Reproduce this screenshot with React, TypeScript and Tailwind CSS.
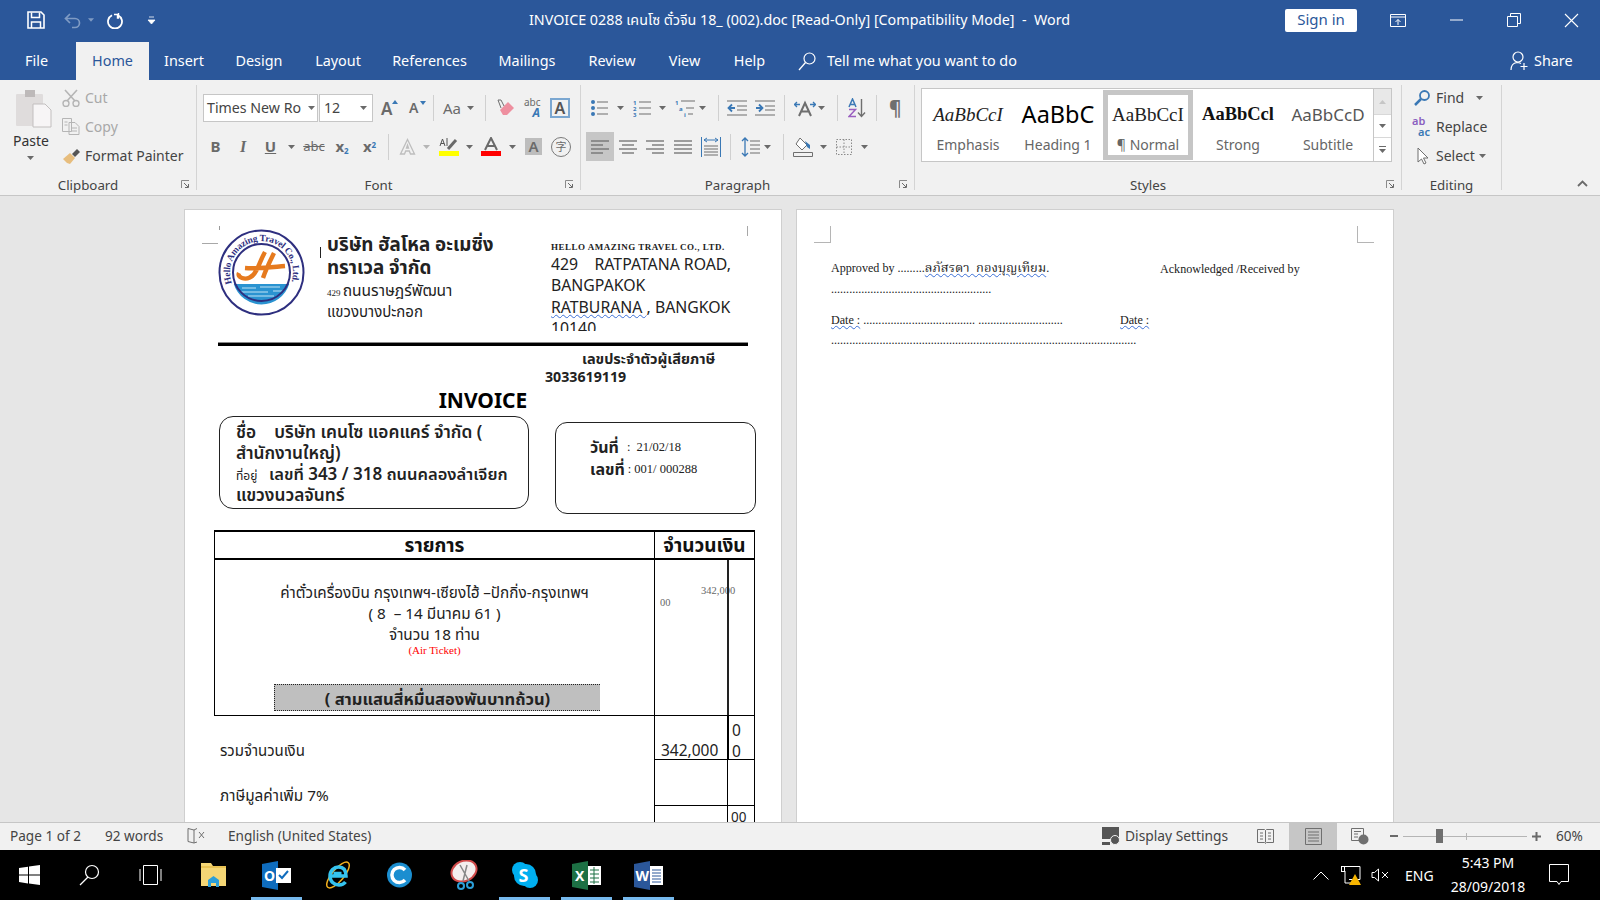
import type { ReactNode } from 'react'

const UI = "font-['Noto_Sans','Noto_Sans_Thai','DejaVu_Sans',sans-serif]"
const SERIF = "font-['Liberation_Serif','Noto_Serif_Thai','DejaVu_Serif',serif]"

function I({ w, h, children, className }: { w: number; h: number; children: ReactNode; className?: string }) {
  return (
    <svg width={w} height={h} viewBox={`0 0 ${w} ${h}`} fill="none" className={'block shrink-0 ' + (className ?? '')}>
      {children}
    </svg>
  )
}

function Caret({ className, color = '#6a6a6a' }: { className?: string; color?: string }) {
  return (
    <I w={7} h={4} className={className}>
      <path d="M0 0h7L3.500 4z" fill={color} />
    </I>
  )
}

function Sep({ className }: { className?: string }) {
  return <div className={'h-[26px] w-px shrink-0 bg-[#d0d0d0] ' + (className ?? '')} />
}

function Launcher() {
  return (
    <I w={9} h={9} className="absolute right-[6px] top-0">
      <path d="M.5 8V.5H8" stroke="#8a8a8a" />
      <path d="M3 3l4 4M4 7.500h3.500V4" stroke="#6a6a6a" />
    </I>
  )
}

function Group({ label, w, children }: { label: string; w: string; children: ReactNode }) {
  return (
    <div className={'relative flex h-[105px] shrink-0 flex-col border-r border-[#d4d4d4] ' + w}>
      <div className="flex-1">{children}</div>
      <div className="relative h-[10px] pr-[20px] text-center text-[13.3px] leading-[10px] text-[#444]">
        {label}
        <Launcher />
      </div>
    </div>
  )
}

function LinesIcon({ rows, color = '#6f6f6f' }: { rows: [number, number][]; color?: string }) {
  return (
    <I w={19} h={14}>
      {rows.map(([a, b], i) => (
        <path key={i} d={`M${a} ${1 + i * 4}H${b}`} stroke={color} strokeWidth="1.3" />
      ))}
    </I>
  )
}

function TitleBar() {
  return (
    <div className="flex h-[40px] shrink-0 items-center bg-[#2b579a] text-white">
      <I w={18} h={18} className="ml-[27px]">
        <path d="M1 1h13l3 3v13H1z" stroke="#fff" strokeWidth="1.6" />
        <path d="M4.500 1.500v5h8v-5M4.500 17v-6h9v6" stroke="#fff" strokeWidth="1.500" />
      </I>
      <I w={17} h={17} className="ml-[19px]">
        <path d="M6 2L1.500 6.500 6 11M2 6.500h9a4.500 4.500 0 0 1 0 9H8" stroke="#7f9bc4" strokeWidth="1.700" />
      </I>
      <Caret className="ml-[7px] w-[6px]" color="#7f9bc4" />
      <I w={17} h={17} className="ml-[13px]">
        <path d="M5 3.200a7 7 0 1 0 6 0" stroke="#fff" strokeWidth="1.800" />
        <path d="M11.500 1v5h-1V2.500H7" stroke="#fff" strokeWidth="1.400" />
      </I>
      <I w={9} h={9} className="ml-[23px]">
        <path d="M2 1h5M1 4h7L4.500 8z" stroke="#fff" fill="#fff" strokeWidth=".8" />
      </I>
      <div className="ml-[373px] w-[535px] whitespace-nowrap text-[14.3px]">
        INVOICE 0288 เคนโซ ตั๋วจีน 18_ (002).doc [Read-Only] [Compatibility Mode]&nbsp; -&nbsp; Word
      </div>
      <div className="ml-[221px] flex h-[23px] w-[72px] items-center justify-center rounded-[2px] bg-white pb-px text-[15px] text-[#2b579a]">
        Sign in
      </div>
      <I w={16} h={13} className="ml-[33px]">
        <path d="M.5.5h15v12H.5zM.5 3h15M8 11V5.500M5.500 8L8 5.500 10.500 8" stroke="#fff" />
      </I>
      <I w={13} h={2} className="ml-[44px]">
        <path d="M0 1h13" stroke="#fff" />
      </I>
      <I w={14} h={14} className="ml-[44px]">
        <path d="M.5 3.500h10v10H.5zM3.500 3.500v-3h10v10h-3" stroke="#fff" />
      </I>
      <I w={15} h={15} className="ml-[43px]">
        <path d="M1 1l13 13M14 1L1 14" stroke="#fff" strokeWidth="1.100" />
      </I>
    </div>
  )
}

function TabBar() {
  const tabs: [string, string][] = [
    ['Insert', 'w-[70px]'],
    ['Design', 'w-[80px]'],
    ['Layout', 'w-[78px]'],
    ['References', 'w-[105px]'],
    ['Mailings', 'w-[90px]'],
    ['Review', 'w-[80px]'],
    ['View', 'w-[65px]'],
    ['Help', 'w-[65px]'],
  ]
  return (
    <div className="flex h-[40px] shrink-0 items-end bg-[#2b579a] text-[14.4px] text-white">
      <div className="flex h-[38px] w-[76px] items-center justify-center pr-[3px]">File</div>
      <div className="flex h-[38px] w-[73px] items-center justify-center bg-[#f1f1f1] text-[#2b579a]">Home</div>
      {tabs.map(([t, w]) => (
        <div key={t} className={'flex h-[38px] items-center justify-center ' + w}>
          {t}
        </div>
      ))}
      <div className="flex h-[38px] items-center">
        <I w={18} h={19} className="ml-[16px]">
          <circle cx="11.500" cy="6.500" r="5.500" stroke="#fff" strokeWidth="1.200" />
          <path d="M7.500 10.500L1 18" stroke="#fff" strokeWidth="1.300" />
        </I>
        <span className="ml-[11px] w-[188px] whitespace-nowrap">Tell me what you want to do</span>
        <I w={19} h={20} className="ml-[495px]">
          <circle cx="8" cy="6" r="5" stroke="#fff" strokeWidth="1.200" />
          <path d="M1 19c0-5 2-7 6-7.500 2 0 3 .5 4 1M14 12v7M10.500 15.500h7" stroke="#fff" strokeWidth="1.200" />
        </I>
        <span className="ml-[5px]">Share</span>
      </div>
    </div>
  )
}

function ClipboardGroup() {
  return (
    <Group label="Clipboard" w="w-[197px]">
      <div className="flex">
        <div className="flex w-[62px] flex-col items-center pt-[5px]">
          <I w={36} h={38} className="translate-x-[3px]">
            <rect x="0" y="4" width="27" height="32" fill="#dfdcdc" rx="1" />
            <rect x="9" y="0" width="10" height="7" fill="#bdb9b9" />
            <path d="M17 14h12l6 6v17H17z" fill="#f7f5f6" stroke="#c2bfbf" />
          </I>
          <div className="mt-[3px] h-[20px] text-[14px] leading-[20px] text-[#333]">Paste</div>
          <Caret className="mt-[5px] mr-[2px]" />
        </div>
        <div className="flex flex-col text-[14px]">
          <div className="flex h-[25px] items-center text-[#a8a8a8]">
            <I w={18} h={18}>
              <path d="M3 1l10 11M15 1L5 12" stroke="#b5b5b5" strokeWidth="1.600" />
              <circle cx="4" cy="14.500" r="3" stroke="#b5b5b5" strokeWidth="1.400" />
              <circle cx="14" cy="14.500" r="3" stroke="#b5b5b5" strokeWidth="1.400" />
            </I>
            <span className="ml-[5px]">Cut</span>
          </div>
          <div className="flex h-[32px] items-center text-[#a8a8a8]">
            <I w={18} h={18}>
              <path d="M.5 1.500h9v13h-9zM7 5.500h6l4 4v8H7z" stroke="#b5b5b5" fill="#f1f1f1" />
              <path d="M2.500 5h3M2.500 8h3M9 11h6M9 14h6" stroke="#b5b5b5" />
            </I>
            <span className="ml-[5px]">Copy</span>
          </div>
          <div className="flex h-[27px] items-center whitespace-nowrap text-[#444]">
            <I w={20} h={18}>
              <path d="M1 12l7-6 5 5-5 6-3-1z" fill="#e7bd7d" />
              <path d="M10 7l5-5 3 3-5 5z" fill="#555" />
            </I>
            <span className="ml-[3px]">Format Painter</span>
          </div>
        </div>
      </div>
    </Group>
  )
}

function BigA({ size, up }: { size: number; up: boolean }) {
  return (
    <span className="relative block w-[17px] text-[#6a6a6a]">
      <span className={"block font-['Noto_Sans'] font-semibold leading-none " + (size > 16 ? 'text-[17px]' : 'text-[14px]')}>A</span>
      <span className={'absolute right-0 top-[0px] h-0 w-0 border-x-[3px] border-x-transparent ' + (up ? 'border-b-[4px] border-b-[#3a78b5]' : 'border-t-[4px] border-t-[#3a78b5]')} />
    </span>
  )
}

function FontGroup() {
  return (
    <Group label="Font" w="w-[384px]">
      <div className="ml-[6px] mt-[9px] flex h-[28px] items-center">
        <div className="flex h-[28px] w-[115px] items-center border border-[#c6c6c6] bg-white pl-[3px] text-[14.2px] text-[#444]">
          <span className="w-[101px] whitespace-nowrap">Times New Ro</span>
          <Caret />
        </div>
        <div className="ml-[1px] flex h-[28px] w-[54px] items-center border border-[#c6c6c6] bg-white pl-[4px] text-[14.2px] text-[#444]">
          <span className="w-[36px]">12</span>
          <Caret />
        </div>
        <div className="ml-[8px]"><BigA size={17} up /></div>
        <div className="ml-[11px] w-[16px]"><BigA size={14} up={false} /></div>
        <Sep className="ml-[8px]" />
        <span className="ml-[9px] w-[18px] whitespace-nowrap text-[15px] leading-none text-[#6a6a6a]">Aa</span>
        <Caret className="ml-[6px]" />
        <Sep className="ml-[11px]" />
        <I w={18} h={18} className="ml-[11px]">
          <path d="M3 11L11 3l6 6-7 7H6z" fill="#ee8f9f" />
          <path d="M4 9L1 1h3l3 6" stroke="#6f6f6f" />
        </I>
        <div className="ml-[9px] flex w-[16px] flex-col">
          <div className="h-[10px] text-[10px] leading-[10px] text-[#6a6a6a]">abc</div>
          <div className="h-[12px] text-right text-[12px] font-bold italic leading-[12px] text-[#3a78b5]">A</div>
        </div>
        <div className="ml-[10px] flex h-[20px] w-[20px] items-center justify-center border-2 border-[#7ba7d1] text-[16px] font-semibold text-[#555]">A</div>
      </div>
      <div className="ml-[6px] mt-[10px] flex h-[29px] items-center text-[#6a6a6a]">
        <span className="ml-[4px] w-[17px] text-center text-[15px] font-bold">B</span>
        <span className={SERIF + ' ml-[10px] w-[18px] text-center text-[16px] font-bold italic'}>I</span>
        <span className="ml-[10px] w-[17px] text-center text-[15px] font-bold underline">U</span>
        <Caret className="ml-[9px]" />
        <span className="ml-[7px] w-[24px] text-center text-[13px] line-through">abc</span>
        <span className="ml-[7px] w-[18px] whitespace-nowrap text-center text-[15px] font-bold">x<sub className="text-[8px] text-[#3a78b5]">2</sub></span>
        <span className="ml-[10px] w-[17px] whitespace-nowrap text-center text-[15px] font-bold">x<sup className="text-[8px] text-[#3a78b5]">2</sup></span>
        <Sep className="ml-[10px]" />
        <I w={17} h={18} className="ml-[10px]">
          <path d="M1.500 16L8.500 1.500 15.500 16h-4l-1.200-3H6.700L5.500 16zM7.500 10h2L8.500 7z" stroke="#bdbdbd" strokeWidth="1.300" />
        </I>
        <Caret className="ml-[7px]" color="#b5b5b5" />
        <I w={20} h={19} className="ml-[9px]">
          <path d="M1 9l2.500-7L6 9M1.800 6.500h3.400M8 1v8" stroke="#555" />
          <path d="M9 12l8-9" stroke="#6a6a6a" strokeWidth="3" />
          <rect x="0" y="14" width="20" height="5" fill="#ffff00" />
        </I>
        <Caret className="ml-[7px]" />
        <I w={20} h={19} className="ml-[8px]">
          <path d="M4 13L10 1l6 12M6 9h8" stroke="#6a6a6a" strokeWidth="2" />
          <rect x="0" y="14" width="20" height="5" fill="#ff0000" />
        </I>
        <Caret className="ml-[8px]" />
        <div className="ml-[9px] flex h-[17px] w-[17px] items-center justify-center bg-[#bdbdbd] text-[15px] font-semibold">A</div>
        <div className="ml-[9px] flex h-[20px] w-[20px] items-center justify-center rounded-full border border-[#7a7a7a] text-[11px] font-['Noto_Sans_CJK_SC',sans-serif]">字</div>
      </div>
    </Group>
  )
}

function ParagraphGroup() {
  const G = '#6f6f6f'
  const B = '#3a78b5'
  return (
    <Group label="Paragraph" w="w-[334px]">
      <div className="mt-[9px] flex h-[28px] items-center">
        <I w={17} h={16} className="ml-[10px]">
          <g fill={B}><circle cx="2" cy="2" r="2" /><circle cx="2" cy="8" r="2" /><circle cx="2" cy="14" r="2" /></g>
          <path d="M6 2h11M6 8h11M6 14h11" stroke={G} strokeWidth="1.200" />
        </I>
        <Caret className="ml-[9px]" />
        <I w={18} h={18} className="ml-[9px]">
          <g fill={B} fontSize="6" fontWeight="700"><text x="0" y="6">1</text><text x="0" y="12">2</text><text x="0" y="18">3</text></g>
          <path d="M6 3h12M6 9h12M6 15h12" stroke={G} strokeWidth="1.200" />
        </I>
        <Caret className="ml-[8px]" />
        <I w={20} h={18} className="ml-[9px]">
          <g fill={B} fontSize="6" fontWeight="700"><text x="0" y="6">1</text><text x="4" y="12">a</text><text x="9" y="18">i</text></g>
          <path d="M6 2h14M11 9h8M13 15h5" stroke={G} strokeWidth="1.200" />
        </I>
        <Caret className="ml-[4px]" />
        <Sep className="ml-[12px]" />
        <I w={20} h={16} className="ml-[8px]">
          <path d="M0 1h20M10 6h10M10 10h10M0 15h20" stroke={G} strokeWidth="1.200" />
          <path d="M8 8H2M5 4.500L1.500 8 5 11.500" stroke={B} strokeWidth="1.800" />
        </I>
        <I w={20} h={16} className="ml-[8px]">
          <path d="M0 1h20M10 6h10M10 10h10M0 15h20" stroke={G} strokeWidth="1.200" />
          <path d="M1 8h6M4 4.500L7.500 8 4 11.500" stroke={B} strokeWidth="1.800" />
        </I>
        <Sep className="ml-[9px]" />
        <I w={22} h={17} className="ml-[9px]">
          <path d="M5 16L11 3l6 13M7.500 11.500h7" stroke={G} strokeWidth="2" />
          <path d="M1 4.500h5M3 2L.5 4.500 3 7M16 4.500h5M19 2l2.500 2.500L19 7" stroke={B} strokeWidth="1.300" />
        </I>
        <Caret className="ml-[2px]" />
        <Sep className="ml-[12px]" />
        <I w={18} h={20} className="ml-[10px]">
          <path d="M1 9l3.500-8L8 9M2.200 6.500h4.600" stroke={B} strokeWidth="1.500" />
          <path d="M1 11.500h6.500L1 18.500h7" stroke="#9a5fc0" strokeWidth="1.500" />
          <path d="M13.500 1v17M10 14.500l3.500 4 3.500-4" stroke={G} strokeWidth="1.400" />
        </I>
        <Sep className="ml-[10px]" />
        <span className="ml-[12px] text-[19px] font-bold leading-none text-[#6f6f6f]">¶</span>
      </div>
      <div className="mt-[10px] flex h-[29px] items-center">
        <div className="ml-[5px] flex h-[29px] w-[28px] items-center justify-center bg-[#c6c6c6]">
          <LinesIcon rows={[[0, 18], [0, 12], [0, 18], [0, 12]]} />
        </div>
        <div className="ml-[5px]"><LinesIcon rows={[[0, 18], [3, 15], [0, 18], [3, 15]]} /></div>
        <div className="ml-[8px]"><LinesIcon rows={[[0, 18], [6, 18], [0, 18], [6, 18]]} /></div>
        <div className="ml-[9px]"><LinesIcon rows={[[0, 18], [0, 18], [0, 18], [0, 18]]} /></div>
        <I w={20} h={20} className="ml-[8px]">
          <path d="M.5 0v20M19.500 0v20" stroke={B} />
          <path d="M3 3h14M6 1L3 3l3 2M14 1l3 2-3 2" stroke={B} />
          <path d="M3 9h14M3 12h14M3 15h14M3 18h14" stroke={G} strokeWidth="1.200" />
        </I>
        <Sep className="ml-[9px]" />
        <I w={19} h={20} className="ml-[10px]">
          <path d="M4 1v18M1 4l3-3 3 3M1 16l3 3 3-3" stroke={B} strokeWidth="1.300" />
          <path d="M9 4h10M9 8h10M9 12h10M9 16h10" stroke={G} strokeWidth="1.200" />
        </I>
        <Caret className="ml-[4px]" />
        <Sep className="ml-[12px]" />
        <I w={20} h={20} className="ml-[9px]">
          <path d="M7 1l7 7-5 5-6-6z" stroke={G} fill="#fff" />
          <path d="M12 4l5 4v4l-3-2z" fill={B} />
          <path d="M.5 15.500h19v4H.5z" stroke={G} />
        </I>
        <Caret className="ml-[7px]" />
        <I w={16} h={16} className="ml-[9px]">
          <path d="M.5.5h15v15H.5zM8 .5v15M.5 8h15" stroke="#8a8a8a" strokeDasharray="1.500 1.500" />
        </I>
        <Caret className="ml-[9px]" />
      </div>
    </Group>
  )
}

function StyleItem({ sample, label, sel }: { sample: ReactNode; label: string; sel?: boolean }) {
  return (
    <div className={'flex h-[70px] w-[90px] shrink-0 flex-col items-center ' + (sel ? 'border-[5px] border-[#c6c6c6]' : 'border-[5px] border-transparent')}>
      <div className="flex h-[42px] items-center whitespace-nowrap">{sample}</div>
      <div className="text-[14px] leading-[20px] text-[#666]">{label}</div>
    </div>
  )
}

function StylesGroup() {
  return (
    <Group label="Styles" w="w-[487px]">
      <div className="ml-[6px] mt-[3px] flex h-[74px] w-[471px] items-center border border-[#c6c6c6] bg-white pl-[1px]">
        <StyleItem label="Emphasis" sample={<span className={SERIF + ' text-[19px] italic text-[#222]'}>AaBbCcI</span>} />
        <StyleItem label="Heading 1" sample={<span className="text-[23.500px] text-black">AaBbC</span>} />
        <StyleItem label="¶ Normal" sel sample={<span className={SERIF + ' text-[19px] text-[#222]'}>AaBbCcI</span>} />
        <StyleItem label="Strong" sample={<span className={SERIF + ' text-[18.500px] font-bold text-[#111]'}>AaBbCcl</span>} />
        <StyleItem label="Subtitle" sample={<span className="text-[17px] text-[#555]">AaBbCcD</span>} />
        <div className="flex h-[72px] w-[18px] shrink-0 flex-col border-l border-[#c6c6c6]">
          <div className="flex h-[26px] items-center justify-center border-b border-[#d8d8d8] bg-[#e8e8e8]"><Caret className="rotate-180" color="#c6c6c6" /></div>
          <div className="flex h-[23px] items-center justify-center border-b border-[#d8d8d8]"><Caret /></div>
          <div className="flex flex-1 flex-col items-center justify-center gap-[2px]">
            <div className="h-px w-[7px] bg-[#6a6a6a]" />
            <Caret />
          </div>
        </div>
      </div>
    </Group>
  )
}

function EditingGroup() {
  return (
    <div className="relative flex h-[105px] w-[100px] shrink-0 flex-col border-r border-[#d4d4d4]">
      <div className="flex-1 text-[14px] text-[#444]">
        <div className="flex h-[25px] items-center">
          <I w={16} h={16} className="ml-[12px]">
            <circle cx="10.500" cy="5.500" r="4.500" stroke="#3a78b5" strokeWidth="1.800" />
            <path d="M7 9l-6 6" stroke="#3a78b5" strokeWidth="2.500" />
          </I>
          <span className="ml-[6px] w-[40px]">Find</span>
          <Caret />
        </div>
        <div className="flex h-[32px] items-center">
          <div className="ml-[10px] w-[24px] text-[11px] font-semibold text-[#3a78b5]">
            <div className="h-[11px] leading-[11px] text-[#8a5fc0]">ab</div>
            <div className="h-[11px] pl-[6px] leading-[11px]">ac</div>
          </div>
          <span>Replace</span>
        </div>
        <div className="flex h-[27px] items-center">
          <I w={13} h={18} className="ml-[15px]">
            <path d="M1 1v14l3.500-3 2.500 5 2-1-2.500-5H11z" stroke="#6f6f6f" fill="#fff" />
          </I>
          <span className="ml-[6px] w-[40px]">Select</span>
          <Caret className="ml-[3px]" />
        </div>
      </div>
      <div className="h-[10px] text-center text-[13.3px] leading-[10px] text-[#444]">Editing</div>
    </div>
  )
}

function Ribbon() {
  return (
    <div className="flex h-[116px] shrink-0 border-b border-[#c6c6c6] bg-[#f1f1f1] pt-[5px]">
      <ClipboardGroup />
      <FontGroup />
      <ParagraphGroup />
      <StylesGroup />
      <EditingGroup />
      <div className="flex h-[105px] flex-1 items-end justify-end pb-[3px] pr-[12px]">
        <I w={11} h={7}>
          <path d="M1 6l4.500-4.500L10 6" stroke="#6a6a6a" strokeWidth="1.800" />
        </I>
      </div>
    </div>
  )
}

function Logo() {
  return (
    <svg width="87" height="87" viewBox="0 0 87 87" fill="none" className="block shrink-0">
      <circle cx="43.500" cy="43.500" r="42" fill="#fff" stroke="#2e2f7f" strokeWidth="2" />
      <path d="M15.800 55h55.400a29 29 0 0 1-55.400 0z" fill="#2a93d1" />
      <path d="M24 59h14M42 58h20M22 63h28M55 62h10M30 67h26" stroke="#bfe3f5" strokeWidth="1.200" />
      <circle cx="43.500" cy="43.500" r="28.500" stroke="#2e2f7f" strokeWidth="2" />
      <defs>
        <path id="logo-ring" d="M13.900 54.300A31.500 31.500 0 1 1 73.100 54.300" />
      </defs>
      <text fontSize="9.400" fontWeight="700" fill="#2e2f7f" fontFamily="Liberation Serif" textLength="119">
        <textPath href="#logo-ring">Hello Amazing Travel Co., Ltd.</textPath>
      </text>
      <path d="M47 23c-4 7-6 14-9 19-3 6-9 9-14 7-3-1-4-3-3-5M56 24c-4 8-8 16-11 25M27 39c14 1 28-1 40-2" stroke="#e67a1e" strokeWidth="4.400" />
    </svg>
  )
}

function PageOne() {
  return (
    <div className="relative h-[720px] w-[598px] shrink-0 border border-[#cfcfcf] bg-white pl-[29px] pt-[19px] text-[#222]">
      <div className="absolute left-[34px] top-[16px] h-[4px] w-px bg-[#9a9a9a]" />
      <div className="absolute left-[17px] top-[33px] h-px w-[16px] bg-[#a8a8a8]" />
      <div className="absolute left-[562px] top-[16px] h-[10px] w-px bg-[#a8a8a8]" />
      <div className="absolute left-[135px] top-[37px] h-[11px] w-px bg-[#222]" />
      <div className="ml-[4px] flex h-[113px]">
        <Logo />
        <div className="ml-[22px] w-[224px] pt-[4px]">
          <div className="h-[23px] whitespace-nowrap text-[18.800px] font-bold leading-[23px]">บริษัท ฮัลโหล อะเมซิ่ง</div>
          <div className="h-[23px] whitespace-nowrap text-[18.800px] font-bold leading-[23px]">ทราเวล จำกัด</div>
          <div className="mt-[1px] h-[21px] whitespace-nowrap text-[15.500px] leading-[21px]">
            <span className={SERIF + ' text-[9px]'}>429 </span>ถนนราษฎร์พัฒนา
          </div>
          <div className="h-[21px] whitespace-nowrap text-[15px] leading-[21px]">แขวงบางปะกอก</div>
        </div>
        <div className="pt-[12px] text-[15.800px] text-[#222]">
          <div className={SERIF + ' h-[13px] whitespace-nowrap text-[9px] font-bold leading-[13px] tracking-[0.5px]'}>HELLO AMAZING TRAVEL CO., LTD.</div>
          <div className="h-[21px] whitespace-nowrap leading-[21px]">429 &nbsp; &nbsp;RATPATANA ROAD,</div>
          <div className="h-[21.500px] leading-[21px]">BANGPAKOK</div>
          <div className="h-[21.500px] whitespace-nowrap leading-[21px]">
            <span className="underline decoration-[#3b6fd6] decoration-wavy decoration-1">RATBURANA </span>, BANGKOK
          </div>
          <div className="h-[13px] overflow-hidden leading-[21px]">10140</div>
        </div>
      </div>
      <div className="ml-[4px] h-[4px] w-[530px] border-t border-[#8a8a8a] bg-black" />
      <div className="ml-[368px] mt-[2px] h-[21px] whitespace-nowrap text-[14.500px] font-bold leading-[21px]">เลขประจำตัวผู้เสียภาษี</div>
      <div className="ml-[331px] h-[16px] text-[14.200px] font-bold leading-[16px]">3033619119</div>
      <div className="ml-[4px] h-[31px] w-[530px] text-center text-[21px] font-bold leading-[30px] text-black">INVOICE</div>
      <div className="flex items-start">
        <div className="ml-[5px] h-[93px] w-[310px] rounded-[14px] border-[1.500px] border-[#222] pl-[16px] pt-[4px] text-[17.300px] font-semibold">
          <div className="h-[21px] whitespace-nowrap leading-[21px]">ชื่อ &nbsp; &nbsp;บริษัท เคนโซ แอคแคร์ จำกัด (</div>
          <div className="h-[21px] leading-[21px]">สำนักงานใหญ่)</div>
          <div className="h-[21px] whitespace-nowrap text-[16.500px] leading-[21px]">
            <span className="text-[12px] font-normal">ที่อยู่ </span>&nbsp;&nbsp;เลขที่ <span className="text-[17px]">343 / 318</span> ถนนคลองลำเจียก
          </div>
          <div className="h-[20px] overflow-hidden whitespace-nowrap leading-[21px]">แขวงนวลจันทร์</div>
        </div>
        <div className="ml-[26px] mt-[6px] h-[92px] w-[201px] rounded-[12px] border-[1.500px] border-[#222] pl-[34px] pt-[13px]">
          <div className="flex h-[22px] items-center whitespace-nowrap">
            <span className="text-[16px] font-bold">วันที่</span>
            <span className={SERIF + ' ml-[8px] text-[12.500px]'}>: &nbsp;21/02/18</span>
          </div>
          <div className="flex h-[22px] items-center whitespace-nowrap">
            <span className="text-[16px] font-bold">เลขที่</span>
            <span className={SERIF + ' ml-[3px] text-[12.500px]'}>: 001/ 000288</span>
          </div>
        </div>
      </div>
      <div className="mt-[16px] w-[541px]">
        <div className="flex h-[30px] items-center border-x-[1.500px] border-y-[2.500px] border-black text-[19px] font-bold text-[#111]">
          <div className="flex h-full w-[439px] items-center justify-center">รายการ</div>
          <div className="flex h-full flex-1 items-center justify-center whitespace-nowrap border-l-[1.500px] border-black">จำนวนเงิน</div>
        </div>
        <div className="flex h-[156px] border-x-[1.500px] border-b-[1.500px] border-black">
          <div className="flex w-[439px] flex-col items-center pt-[22px] text-[15.300px]">
            <div className="h-[21px] whitespace-nowrap leading-[21px]">ค่าตั๋วเครื่องบิน กรุงเทพฯ-เซียงไฮ้ –ปักกิ่ง-กรุงเทพฯ</div>
            <div className="h-[21px] whitespace-nowrap leading-[21px]">( 8 &nbsp;– 14 มีนาคม 61 )</div>
            <div className="h-[20px] whitespace-nowrap leading-[21px]">จำนวน 18 ท่าน</div>
            <div className={SERIF + ' h-[12px] text-[11px] leading-[12px] text-[#ff0000]'}>(Air Ticket)</div>
            <div className="ml-[5px] mt-[28px] flex h-[27px] w-[326px] items-center justify-center border-b border-l border-t border-dotted border-[#222] bg-[#bfbfbf] pt-[3px] text-[16.500px] font-bold">
              ( สามแสนสี่หมื่นสองพันบาทถ้วน)
            </div>
          </div>
          <div className="flex flex-1 border-l-[1.500px] border-black">
            <div className={SERIF + ' w-[72px] pt-[25px] text-[10.500px] text-[#666]'}>
              <div className="h-[12px] whitespace-nowrap pl-[46px] leading-[12px]">342,000</div>
              <div className="h-[12px] pl-[5px] leading-[12px]">00</div>
            </div>
            <div className="flex-1 border-l-2 border-[#222]" />
          </div>
        </div>
        <div className="flex h-[44px]">
          <div className="w-[440px] pl-[6px] pt-[24px] text-[15px] leading-[21px]">รวมจำนวนเงิน</div>
          <div className="flex flex-1 border-x-[1.500px] border-b-[1.500px] border-black text-[15.500px] leading-[21px]">
            <div className="w-[72px] pl-[6px] pt-[24px]">342,000</div>
            <div className="flex-1 border-l-2 border-black pl-[3px] pt-[4px]">
              <div>0</div>
              <div>0</div>
            </div>
          </div>
        </div>
        <div className="flex h-[46px]">
          <div className="flex w-[440px] items-end pl-[6px] text-[15.300px] leading-[21px]">ภาษีมูลค่าเพิ่ม 7%</div>
          <div className="flex flex-1 border-x-[1.500px] border-b-[1.500px] border-black">
            <div className="w-[72px]" />
            <div className="flex-1 border-l border-black" />
          </div>
        </div>
        <div className="flex h-[40px]">
          <div className="w-[440px]" />
          <div className="flex flex-1 border-x-[1.500px] border-black text-[13.500px]">
            <div className="w-[72px]" />
            <div className="flex-1 border-l border-black pl-[3px] pt-[1px]">00</div>
          </div>
        </div>
      </div>
    </div>
  )
}

function PageTwo() {
  return (
    <div className={SERIF + ' relative h-[720px] w-[598px] shrink-0 border border-[#cfcfcf] bg-white pl-[34px] pt-[49px] text-[12.100px] text-[#222]'}>
      <div className="absolute left-[17px] top-[16px] h-[17px] w-[17px] border-b border-r border-[#b5b5b5]" />
      <div className="absolute left-[560px] top-[16px] h-[17px] w-[17px] border-b border-l border-[#b5b5b5]" />
      <div className="flex h-[20px] items-center whitespace-nowrap">
        <span className="w-[329px]">
          Approved by .........
          <span className="text-[12.900px] underline decoration-[#3b6fd6] decoration-wavy decoration-1">ลภัสรดา&nbsp; กองบุญเทียม</span>.
        </span>
        <span>Acknowledged /Received by</span>
      </div>
      <div className="flex h-[20px] items-center whitespace-nowrap">{'.'.repeat(53)}</div>
      <div className="mt-[12px] flex h-[19px] items-center whitespace-nowrap">
        <span className="w-[289px]">
          <span className="underline decoration-[#3b6fd6] decoration-wavy decoration-1">Date :</span> {'.'.repeat(37)} {'.'.repeat(28)}
        </span>
        <span className="underline decoration-[#3b6fd6] decoration-wavy decoration-1">Date :</span>
      </div>
      <div className="flex h-[20px] items-center whitespace-nowrap">{'.'.repeat(101)}</div>
    </div>
  )
}

function StatusBar() {
  const G = '#6f6f6f'
  return (
    <div className="flex h-[28px] shrink-0 items-center border-t border-[#c6c6c6] bg-[#f1f1f1] pb-px text-[13.600px] text-[#444]">
      <div className="flex w-[1102px] shrink-0 items-center">
        <span className="ml-[10px] w-[95px]">Page 1 of 2</span>
        <span className="w-[82px]">92 words</span>
        <I w={18} h={18}>
          <path d="M1 1.500l6 1.500v13l-6-1.500zM7 3l3-1.500M7 16l3-1" stroke={G} />
          <path d="M12 5l5 6M17 5l-5 6" stroke={G} />
        </I>
        <span className="ml-[23px]">English (United States)</span>
      </div>
      <I w={19} h={19}>
        <rect x="0" y="0" width="17" height="12" fill="#555" />
        <rect x="0" y="15" width="8" height="3" fill="#555" />
        <circle cx="13" cy="13" r="4.500" fill="#555" stroke="#f1f1f1" />
      </I>
      <span className="ml-[4px] w-[102px] whitespace-nowrap text-[13.800px]">Display Settings</span>
      <I w={17} h={15} className="ml-[30px]">
        <path d="M.5.5h7l1 1 1-1h7v13h-7l-1 1-1-1h-7zM8.500 1.500v12M3 4h3M3 7h3M3 10h3M11 4h3M11 7h3M11 10h3" stroke={G} />
      </I>
      <div className="ml-[15px] flex h-[28px] w-[48px] items-center justify-center bg-[#c6c6c6]">
        <I w={17} h={17}>
          <path d="M.5.5h16v16H.5zM3 4h11M3 7h11M3 10h11M3 13h11" stroke={G} />
        </I>
      </div>
      <I w={18} h={17} className="ml-[14px]">
        <path d="M.5.5h12v12H.5zM3 3.500h7M3 6h4M3 9h4" stroke={G} />
        <circle cx="12.500" cy="11.500" r="5" fill={G} />
      </I>
      <div className="ml-[21px] h-[2px] w-[8px] bg-[#6a6a6a]" />
      <div className="relative ml-[5px] h-px w-[124px] bg-[#b5b5b5]">
        <div className="absolute left-[33px] top-[-7px] h-[14px] w-[7px] bg-[#6f6f6f]" />
        <div className="absolute left-[63px] top-[-3px] h-[7px] w-px bg-[#b5b5b5]" />
      </div>
      <I w={9} h={9} className="ml-[5px]">
        <path d="M0 4.500h9M4.500 0v9" stroke="#6a6a6a" strokeWidth="2" />
      </I>
      <span className="ml-[15px]">60%</span>
    </div>
  )
}

function TaskIcon({ w, active, children }: { w: string; active?: boolean; children: ReactNode }) {
  return (
    <div className={'relative flex h-[50px] shrink-0 items-center justify-center ' + w}>
      {children}
      {active && <div className="absolute bottom-0 left-0 right-0 h-[3px] bg-[#76b9ed]" />}
    </div>
  )
}

function Taskbar() {
  return (
    <div className="flex h-[50px] shrink-0 items-center bg-black text-white">
      <TaskIcon w="w-[59px]">
        <I w={21} h={20}>
          <path d="M0 3l9-1.300V9.500H0zM10 1.500L21 0v9.500H10zM0 10.500h9v8L0 17zM10 10.500h11V20l-11-1.500z" fill="#fff" />
        </I>
      </TaskIcon>
      <TaskIcon w="w-[61px]">
        <I w={21} h={22}>
          <circle cx="13" cy="8" r="6.500" stroke="#fff" strokeWidth="1.200" />
          <path d="M9 13L1 21" stroke="#fff" strokeWidth="1.300" />
        </I>
      </TaskIcon>
      <TaskIcon w="w-[61px]">
        <I w={25} h={20}>
          <path d="M5.500.5h14v19h-14zM2 4v12M23 4v12" stroke="#fff" />
        </I>
      </TaskIcon>
      <TaskIcon w="w-[65px]">
        <I w={27} h={24}>
          <path d="M1 0h10l2 3h13v20H1z" fill="#f4d675" />
          <rect x="1" y="3" width="25" height="2" fill="#e8c253" />
          <path d="M8 24v-7l5.500-4 5.500 4v7h-3v-4h-5v4z" fill="#2b9fd9" />
        </I>
      </TaskIcon>
      <div className="w-[5px]" />
      <TaskIcon w="w-[51px]" active>
        <I w={29} h={29}>
          <path d="M0 3l16-3v29L0 26z" fill="#0f6cbd" />
          <rect x="14" y="7" width="15" height="15" fill="#fff" />
          <path d="M17 14l3 3 6-7" stroke="#0f6cbd" strokeWidth="2" />
          <text x="2" y="20" fontSize="14" fontWeight="700" fill="#fff" fontFamily="Noto Sans">O</text>
        </I>
      </TaskIcon>
      <TaskIcon w="w-[72px]">
        <I w={28} h={29}>
          <ellipse cx="14" cy="14" rx="16" ry="6" transform="rotate(-50 14 14)" stroke="#f2b01e" strokeWidth="1.500" />
          <path d="M7 15h15c0-6-3-9-7.500-9S6 9.500 6 15s4 9 9 9c3 0 5-1 6.500-3M9.500 12.500h8" stroke="#35c3ee" strokeWidth="3.500" />
        </I>
      </TaskIcon>
      <TaskIcon w="w-[51px]">
        <I w={25} h={26}>
          <circle cx="12.500" cy="13" r="12.500" fill="#1b8ed0" />
          <path d="M18 8a7.500 7.500 0 1 0 0 10" stroke="#fff" strokeWidth="3.500" />
        </I>
      </TaskIcon>
      <TaskIcon w="w-[74px]">
        <I w={31} h={30}>
          <ellipse cx="17" cy="11" rx="13" ry="10" transform="rotate(-25 17 11)" fill="#f4eeee" stroke="#d04a4a" strokeWidth="2" />
          <path d="M13 5l9 16M20 5l-4 16" stroke="#888" strokeWidth="1.500" />
          <circle cx="23" cy="25" r="3" stroke="#2b9fd9" strokeWidth="2" />
          <circle cx="14" cy="26" r="3" stroke="#2b9fd9" strokeWidth="2" />
        </I>
      </TaskIcon>
      <TaskIcon w="w-[51px]" active>
        <I w={28} h={28}>
          <circle cx="9" cy="9" r="8" fill="#00aff0" />
          <circle cx="19" cy="19" r="8" fill="#00aff0" />
          <rect x="3" y="3" width="22" height="22" rx="10" fill="#00aff0" />
          <text x="7.500" y="21" fontSize="18" fontWeight="700" fill="#fff" fontFamily="Noto Sans">S</text>
        </I>
      </TaskIcon>
      <div className="w-[11px]" />
      <TaskIcon w="w-[51px]" active>
        <I w={29} h={29}>
          <path d="M0 3l16-3v29L0 26z" fill="#1d7044" />
          <path d="M16 5h13v19H16z" fill="#fff" />
          <path d="M18 9h9M18 13h9M18 17h9M18 21h9M22 6v17" stroke="#1d7044" />
          <text x="3" y="20" fontSize="14" fontWeight="700" fill="#fff" fontFamily="Noto Sans">X</text>
        </I>
      </TaskIcon>
      <div className="w-[11px]" />
      <TaskIcon w="w-[51px]" active>
        <I w={29} h={29}>
          <path d="M0 3l16-3v29L0 26z" fill="#2b579a" />
          <path d="M16 5h13v19H16z" fill="#fff" />
          <path d="M18 9h9M18 12h9M18 15h9M18 18h9M18 21h9" stroke="#2b579a" />
          <text x="1.500" y="20" fontSize="14" fontWeight="700" fill="#fff" fontFamily="Noto Sans">W</text>
        </I>
      </TaskIcon>
      <div className="flex flex-1 items-center justify-end pr-[31px]">
        <I w={16} h={9}>
          <path d="M.5 8.500l7.500-7.500 7.500 7.500" stroke="#fff" />
        </I>
        <I w={20} h={20} className="ml-[12px]">
          <path d="M4 1.500h15v13H8M4 6v12h8" stroke="#fff" />
          <rect x=".5" y="1.500" width="3" height="5" stroke="#fff" />
          <path d="M14 9l6 11H8z" fill="#f7b500" />
        </I>
        <I w={19} h={14} className="ml-[10px]">
          <path d="M1 4.500h2.500L7.500 1v12l-4-3.500H1z" stroke="#fff" />
          <path d="M11 4l6 6M17 4l-6 6" stroke="#fff" />
        </I>
        <span className="ml-[15px] w-[28px] text-[14px]">ENG</span>
        <div className="ml-[17px] w-[76px] text-center text-[14px] leading-[24px]">
          <div>5:43 PM</div>
          <div className="whitespace-nowrap">28/09/2018</div>
        </div>
        <I w={20} h={22} className="ml-[23px]">
          <path d="M.5.5h19v17H12l-2 3-2-3H.5z" stroke="#fff" />
        </I>
      </div>
    </div>
  )
}

export default function App() {
  return (
    <div className={'flex h-[900px] w-[1600px] flex-col overflow-hidden ' + UI}>
      <TitleBar />
      <TabBar />
      <Ribbon />
      <div className="flex min-h-0 flex-1 items-start gap-[14px] overflow-hidden bg-[#e6e6e6] pl-[184px] pt-[13px]">
        <PageOne />
        <PageTwo />
      </div>
      <StatusBar />
      <Taskbar />
    </div>
  )
}
